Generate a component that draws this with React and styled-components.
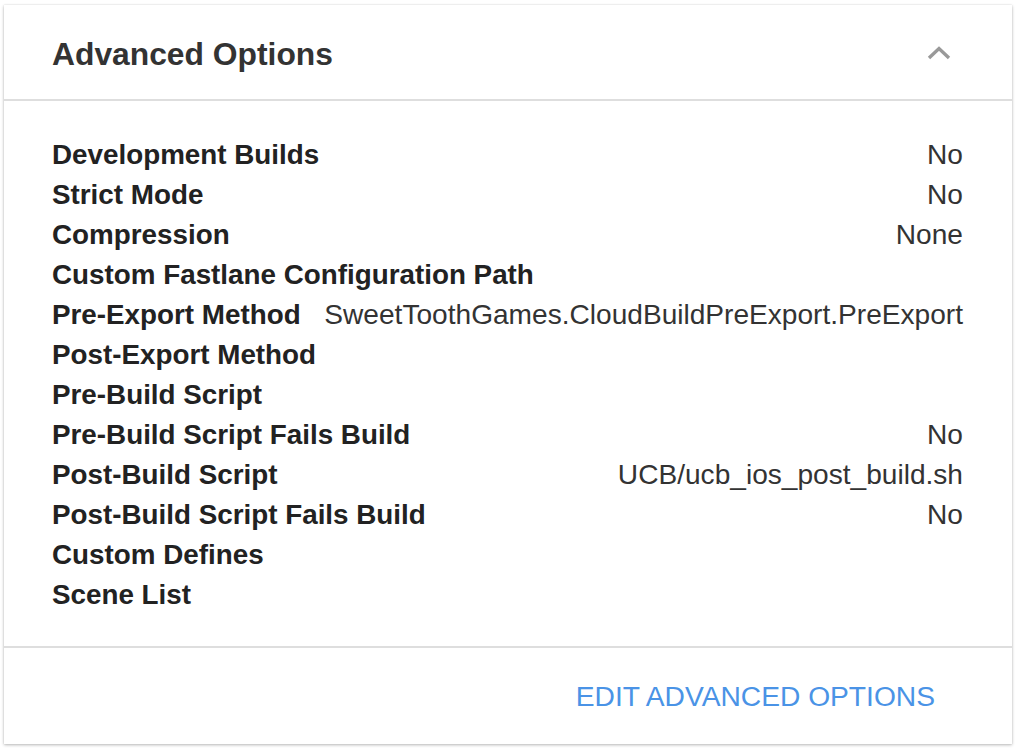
import React from "react";
import styled, { createGlobalStyle } from "styled-components";

const Global = createGlobalStyle`
  html, body { margin: 0; padding: 0; background: #ffffff; }
  body { font-family: "Liberation Sans", Arial, sans-serif; }
`;

const Page = styled.div`
  padding: 5px 6px 5px 4px;
`;

const Card = styled.section`
  width: 1008px;
  background: #fff;
  box-shadow: 0 1px 3px rgba(0, 0, 0, 0.28), 0 0 1px rgba(0, 0, 0, 0.12);
  box-sizing: border-box;
`;

const Header = styled.header`
  height: 96px;
  display: flex;
  align-items: center;
  justify-content: space-between;
  padding: 4px 60px 0 48px;
  border-bottom: 2px solid #dedede;
  box-sizing: border-box;
`;

const Title = styled.h2`
  margin: 0;
  font-size: 31.8px;
  font-weight: 700;
  color: #333;
`;

const Chevron = styled.svg`
  width: 26px;
  height: 16px;
  display: block;
  margin-top: -2px;
`;

const Body = styled.div`
  padding: 34px 49px 31px 48px;
  border-bottom: 2px solid #dedede;
`;

const Row = styled.div`
  display: flex;
  justify-content: space-between;
  align-items: baseline;
  height: 40px;
  font-size: 27.8px;
  line-height: 40px;
`;

const Label = styled.span`
  font-weight: 700;
  color: #222;
  white-space: nowrap;
`;

const Value = styled.span`
  color: #333;
  white-space: nowrap;
  font-size: 28.1px;
`;

const Footer = styled.footer`
  height: 96px;
  display: flex;
  align-items: center;
  justify-content: flex-end;
  padding-right: 77px;
`;

const LinkButton = styled.a`
  font-size: 28.2px;
  color: #4a93e6;
  text-transform: uppercase;
  text-decoration: none;
  cursor: pointer;
`;

const rows = [
  ["Development Builds", "No"],
  ["Strict Mode", "No"],
  ["Compression", "None"],
  ["Custom Fastlane Configuration Path", ""],
  ["Pre-Export Method", "SweetToothGames.CloudBuildPreExport.PreExport"],
  ["Post-Export Method", ""],
  ["Pre-Build Script", ""],
  ["Pre-Build Script Fails Build", "No"],
  ["Post-Build Script", "UCB/ucb_ios_post_build.sh"],
  ["Post-Build Script Fails Build", "No"],
  ["Custom Defines", ""],
  ["Scene List", ""],
];

export default function App() {
  return (
    <>
      <Global />
      <Page>
        <Card>
          <Header>
            <Title>Advanced Options</Title>
            <Chevron viewBox="0 0 26 16">
              <path d="M3 13 L13 3.5 L23 13" fill="none" stroke="#999" strokeWidth="3.4" />
            </Chevron>
          </Header>
          <Body>
            {rows.map(([l, v]) => (
              <Row key={l}>
                <Label>{l}</Label>
                <Value>{v}</Value>
              </Row>
            ))}
          </Body>
          <Footer>
            <LinkButton>Edit Advanced Options</LinkButton>
          </Footer>
        </Card>
      </Page>
    </>
  );
}
